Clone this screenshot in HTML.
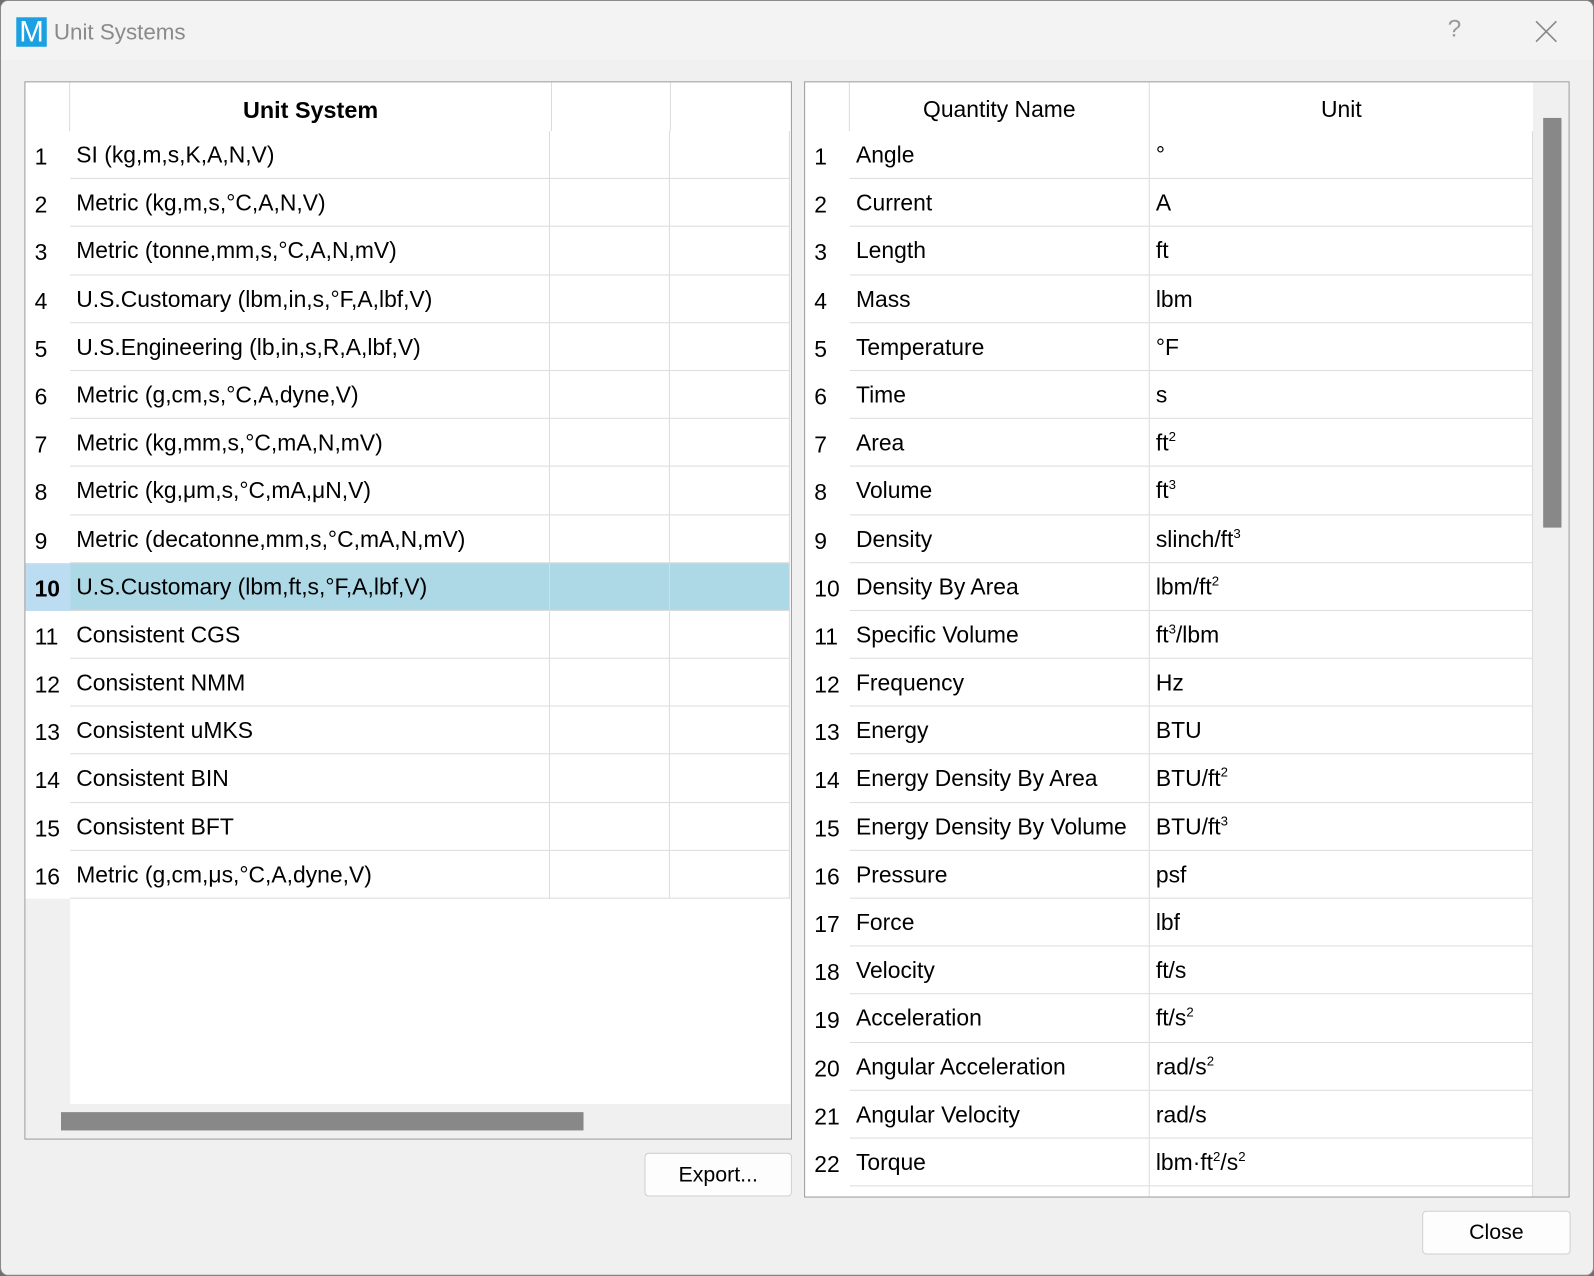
<!DOCTYPE html>
<html><head><meta charset="utf-8">
<style>
html,body{margin:0;padding:0;width:1594px;height:1276px;overflow:hidden;background:#6e6e6e;}
#w{position:absolute;left:0;top:0;width:1568px;height:1255px;transform:scale(1.01658);transform-origin:0 0;font-family:"Liberation Sans",sans-serif;}
#win{position:absolute;left:0;top:0;width:1566px;height:1253px;background:#f0f0f0;border:1px solid #8a8a8a;border-radius:8px;overflow:hidden;}
#title{position:absolute;left:0;top:0;width:100%;height:58px;background:#f3f3f3;}
.ico{position:absolute;left:15px;top:16px;width:30px;height:29px;background:#1ba1e2;color:#fff;font-size:29px;line-height:30px;text-align:center}
.tt{position:absolute;left:52px;top:18px;font-size:22px;color:#8a8a8a}
.q{position:absolute;left:1423px;top:14px;font-size:24px;color:#999}
.panel{position:absolute;background:#fff;border:1px solid #9a9a9a;overflow:hidden}
.r{display:flex;height:47.2px}
.r>div{box-sizing:border-box;height:47.2px;border-bottom:1px solid #dcdcdc;border-right:1px solid #dcdcdc;font-size:22.5px;white-space:nowrap;overflow:hidden;padding-left:6px;line-height:48px;color:#000;flex:none}
.r>div.n{border:none;padding-left:9px;line-height:52px}
.h{display:flex;height:48px}
.h>div{box-sizing:border-box;height:48px;text-align:center;font-size:22.5px;line-height:54px;flex:none;border-right:1px solid #dcdcdc}
.r.s>div{background:#add8e6}
.r.s>div.n{background:#bcdcf2;font-weight:bold}
sup{font-size:13px;vertical-align:9px;line-height:0}
.btn{position:absolute;background:#fdfdfd;border:1px solid #d0d0d0;border-radius:4px;font-size:21px;text-align:center;line-height:41px;color:#000}
.L .n{width:44px}.L .a{width:472px}.L .b{width:118px}.L .c{width:118px}
.R .n{width:44px}.R .a{width:295px}.R .b{width:377px}
</style></head><body><div id="w"><div id="win">
<div id="title"><div class="ico">M</div><div class="tt">Unit Systems</div><div class="q">?</div>
<svg style="position:absolute;left:1509px;top:19px" width="22" height="22"><path d="M1 1L21 21M21 1L1 21" stroke="#888" stroke-width="1.6"/></svg></div>

<div class="panel L" style="left:23px;top:79px;width:753px;height:1039px">
<div class="h"><div class="n"></div><div class="a" style="font-weight:bold;font-size:23px;border-right:none;width:473px">Unit System</div><div class="b" style="border-left:1px solid #dcdcdc"></div><div class="c" style="border:none"></div></div>
<div class="r"><div class="n">1</div><div class="a">SI (kg,m,s,K,A,N,V)</div><div class="b"></div><div class="c"></div></div>
<div class="r"><div class="n">2</div><div class="a">Metric (kg,m,s,°C,A,N,V)</div><div class="b"></div><div class="c"></div></div>
<div class="r"><div class="n">3</div><div class="a">Metric (tonne,mm,s,°C,A,N,mV)</div><div class="b"></div><div class="c"></div></div>
<div class="r"><div class="n">4</div><div class="a">U.S.Customary (lbm,in,s,°F,A,lbf,V)</div><div class="b"></div><div class="c"></div></div>
<div class="r"><div class="n">5</div><div class="a">U.S.Engineering (lb,in,s,R,A,lbf,V)</div><div class="b"></div><div class="c"></div></div>
<div class="r"><div class="n">6</div><div class="a">Metric (g,cm,s,°C,A,dyne,V)</div><div class="b"></div><div class="c"></div></div>
<div class="r"><div class="n">7</div><div class="a">Metric (kg,mm,s,°C,mA,N,mV)</div><div class="b"></div><div class="c"></div></div>
<div class="r"><div class="n">8</div><div class="a">Metric (kg,μm,s,°C,mA,μN,V)</div><div class="b"></div><div class="c"></div></div>
<div class="r"><div class="n">9</div><div class="a">Metric (decatonne,mm,s,°C,mA,N,mV)</div><div class="b"></div><div class="c"></div></div>
<div class="r s"><div class="n">10</div><div class="a">U.S.Customary (lbm,ft,s,°F,A,lbf,V)</div><div class="b"></div><div class="c"></div></div>
<div class="r"><div class="n">11</div><div class="a">Consistent CGS</div><div class="b"></div><div class="c"></div></div>
<div class="r"><div class="n">12</div><div class="a">Consistent NMM</div><div class="b"></div><div class="c"></div></div>
<div class="r"><div class="n">13</div><div class="a">Consistent uMKS</div><div class="b"></div><div class="c"></div></div>
<div class="r"><div class="n">14</div><div class="a">Consistent BIN</div><div class="b"></div><div class="c"></div></div>
<div class="r"><div class="n">15</div><div class="a">Consistent BFT</div><div class="b"></div><div class="c"></div></div>
<div class="r"><div class="n">16</div><div class="a">Metric (g,cm,μs,°C,A,dyne,V)</div><div class="b"></div><div class="c"></div></div>
<div style="position:absolute;left:0;top:803px;width:44px;height:202px;background:#f0f0f0"></div>
<div style="position:absolute;left:0;top:1005px;width:753px;height:34px;background:#f0f0f0"></div>
<div style="position:absolute;left:35px;top:1013px;width:514px;height:18px;background:#888"></div>
</div>
<div class="btn" style="left:633px;top:1133px;width:143px;height:41px">Export...</div>

<div class="panel R" style="left:790px;top:79px;width:751px;height:1096px">
<div class="h"><div class="n"></div><div class="a">Quantity Name</div><div class="b" style="border:none">Unit</div></div>
<div class="r"><div class="n">1</div><div class="a">Angle</div><div class="b">°</div></div>
<div class="r"><div class="n">2</div><div class="a">Current</div><div class="b">A</div></div>
<div class="r"><div class="n">3</div><div class="a">Length</div><div class="b">ft</div></div>
<div class="r"><div class="n">4</div><div class="a">Mass</div><div class="b">lbm</div></div>
<div class="r"><div class="n">5</div><div class="a">Temperature</div><div class="b">°F</div></div>
<div class="r"><div class="n">6</div><div class="a">Time</div><div class="b">s</div></div>
<div class="r"><div class="n">7</div><div class="a">Area</div><div class="b">ft<sup>2</sup></div></div>
<div class="r"><div class="n">8</div><div class="a">Volume</div><div class="b">ft<sup>3</sup></div></div>
<div class="r"><div class="n">9</div><div class="a">Density</div><div class="b">slinch/ft<sup>3</sup></div></div>
<div class="r"><div class="n">10</div><div class="a">Density By Area</div><div class="b">lbm/ft<sup>2</sup></div></div>
<div class="r"><div class="n">11</div><div class="a">Specific Volume</div><div class="b">ft<sup>3</sup>/lbm</div></div>
<div class="r"><div class="n">12</div><div class="a">Frequency</div><div class="b">Hz</div></div>
<div class="r"><div class="n">13</div><div class="a">Energy</div><div class="b">BTU</div></div>
<div class="r"><div class="n">14</div><div class="a">Energy Density By Area</div><div class="b">BTU/ft<sup>2</sup></div></div>
<div class="r"><div class="n">15</div><div class="a">Energy Density By Volume</div><div class="b">BTU/ft<sup>3</sup></div></div>
<div class="r"><div class="n">16</div><div class="a">Pressure</div><div class="b">psf</div></div>
<div class="r"><div class="n">17</div><div class="a">Force</div><div class="b">lbf</div></div>
<div class="r"><div class="n">18</div><div class="a">Velocity</div><div class="b">ft/s</div></div>
<div class="r"><div class="n">19</div><div class="a">Acceleration</div><div class="b">ft/s<sup>2</sup></div></div>
<div class="r"><div class="n">20</div><div class="a">Angular Acceleration</div><div class="b">rad/s<sup>2</sup></div></div>
<div class="r"><div class="n">21</div><div class="a">Angular Velocity</div><div class="b">rad/s</div></div>
<div class="r"><div class="n">22</div><div class="a">Torque</div><div class="b">lbm·ft<sup>2</sup>/s<sup>2</sup></div></div>
<div class="r"><div class="n"></div><div class="a"></div><div class="b"></div></div>
<div style="position:absolute;left:716px;top:0;width:35px;height:1096px;background:#f0f0f0"></div>
<div style="position:absolute;left:726px;top:35px;width:18px;height:403px;background:#888"></div>
</div>
<div class="btn" style="left:1398px;top:1190px;width:144px;height:41px">Close</div>
</div></div></body></html>
